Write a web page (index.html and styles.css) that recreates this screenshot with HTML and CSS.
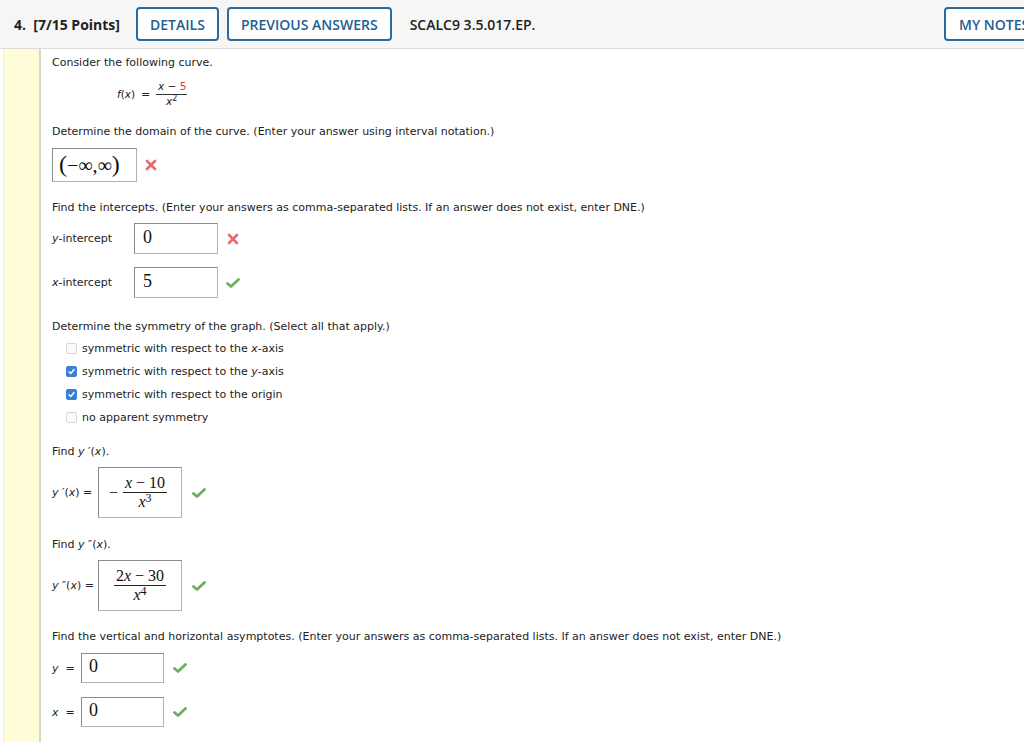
FILE: index.html
```
<!DOCTYPE html>
<html>
<head>
<meta charset="utf-8">
<link rel="stylesheet" href="styles.css">
</head>
<body>
<div class="page">
  <div class="header">
    <span class="qnum">4.&nbsp; [7/15 Points]</span>
    <span class="btn details">DETAILS</span>
    <span class="btn">PREVIOUS ANSWERS</span>
    <span class="code">SCALC9 3.5.017.EP.</span>
    <span class="btn notes">MY NOTES</span>
  </div>
  <div class="main">
    <div class="side"></div>
    <div class="content">
      <p class="txt t1">Consider the following curve.</p>
      <div class="formula">
        <span class="fx"><i>f</i>(<i>x</i>)</span>
        <span class="eq">=</span>
        <span class="sfrac">
          <span class="snum"><i>x</i> − <span class="red">5</span></span>
          <span class="sden"><i>x</i><sup>2</sup></span>
        </span>
      </div>
      <p class="txt t2">Determine the domain of the curve. (Enter your answer using interval notation.)</p>
      <div class="row r-domain">
        <span class="box domain"><span class="math big"><span class="paren">(</span>−∞,∞<span class="paren">)</span></span></span>
        <svg class="icon" viewBox="0 0 12 12"><path d="M2 2 L10 10 M10 2 L2 10" stroke="#e96a6a" stroke-width="2.6" stroke-linecap="round"/></svg>
      </div>
      <p class="txt t3">Find the intercepts. (Enter your answers as comma-separated lists. If an answer does not exist, enter DNE.)</p>
      <div class="row r-int1">
        <span class="lbl w-int"><i>y</i>-intercept</span>
        <span class="box ibox"><span class="math">0</span></span>
        <svg class="icon x2" viewBox="0 0 12 12"><path d="M2 2 L10 10 M10 2 L2 10" stroke="#e96a6a" stroke-width="2.6" stroke-linecap="round"/></svg>
      </div>
      <div class="row r-int2">
        <span class="lbl w-int"><i>x</i>-intercept</span>
        <span class="box ibox"><span class="math">5</span></span>
        <svg class="icon ck2" viewBox="0 0 14 12"><path d="M1.5 6.5 L5 9.5 L12.5 2.5" fill="none" stroke="#6fae5f" stroke-width="2.8" stroke-linecap="round" stroke-linejoin="round"/></svg>
      </div>
      <p class="txt t4">Determine the symmetry of the graph. (Select all that apply.)</p>
      <div class="checks">
        <div class="crow"><span class="cb"></span><span class="ctext">symmetric with respect to the <i>x</i>-axis</span></div>
        <div class="crow"><span class="cb on"><svg viewBox="0 0 10 10"><path d="M2.2 5.2 L4.2 7.2 L7.8 2.8" fill="none" stroke="#fff" stroke-width="1.6" stroke-linecap="round" stroke-linejoin="round"/></svg></span><span class="ctext">symmetric with respect to the <i>y</i>-axis</span></div>
        <div class="crow"><span class="cb on"><svg viewBox="0 0 10 10"><path d="M2.2 5.2 L4.2 7.2 L7.8 2.8" fill="none" stroke="#fff" stroke-width="1.6" stroke-linecap="round" stroke-linejoin="round"/></svg></span><span class="ctext">symmetric with respect to the origin</span></div>
        <div class="crow"><span class="cb"></span><span class="ctext">no apparent symmetry</span></div>
      </div>
      <p class="txt t5">Find <i>y</i> ′(<i>x</i>).</p>
      <div class="row r-d1">
        <span class="lbl w-d"><i>y</i> ′(<i>x</i>) =</span>
        <span class="box dbox">
          <span class="math mrow"><span class="minus">−</span><span class="mfrac"><span class="mnum"><i>x</i> − 10</span><span class="mden"><i>x</i><sup>3</sup></span></span></span>
        </span>
        <svg class="icon ck3" viewBox="0 0 14 12"><path d="M1.5 6.5 L5 9.5 L12.5 2.5" fill="none" stroke="#6fae5f" stroke-width="2.8" stroke-linecap="round" stroke-linejoin="round"/></svg>
      </div>
      <p class="txt t6">Find <i>y</i> ″(<i>x</i>).</p>
      <div class="row r-d2">
        <span class="lbl w-d"><i>y</i> ″(<i>x</i>) =</span>
        <span class="box dbox">
          <span class="math mrow"><span class="mfrac"><span class="mnum">2<i>x</i> − 30</span><span class="mden"><i>x</i><sup>4</sup></span></span></span>
        </span>
        <svg class="icon ck3" viewBox="0 0 14 12"><path d="M1.5 6.5 L5 9.5 L12.5 2.5" fill="none" stroke="#6fae5f" stroke-width="2.8" stroke-linecap="round" stroke-linejoin="round"/></svg>
      </div>
      <p class="txt t7">Find the vertical and horizontal asymptotes. (Enter your answers as comma-separated lists. If an answer does not exist, enter DNE.)</p>
      <div class="row r-a1">
        <span class="lbl w-a"><i>y</i> &nbsp;=</span>
        <span class="box abox"><span class="math">0</span></span>
        <svg class="icon ck4" viewBox="0 0 14 12"><path d="M1.5 6.5 L5 9.5 L12.5 2.5" fill="none" stroke="#6fae5f" stroke-width="2.8" stroke-linecap="round" stroke-linejoin="round"/></svg>
      </div>
      <div class="row r-a2">
        <span class="lbl w-a"><i>x</i> &nbsp;=</span>
        <span class="box abox"><span class="math">0</span></span>
        <svg class="icon ck4" viewBox="0 0 14 12"><path d="M1.5 6.5 L5 9.5 L12.5 2.5" fill="none" stroke="#6fae5f" stroke-width="2.8" stroke-linecap="round" stroke-linejoin="round"/></svg>
      </div>
    </div>
  </div>
</div>
</body>
</html>
```

FILE: styles.css
```
html, body {
  margin: 0;
  padding: 0;
  background: #fff;
  overflow: hidden;
}
.page {
  width: 1024px;
  height: 742px;
  overflow: hidden;
}
.header {
  width: 1060px;
  height: 49px;
  box-sizing: border-box;
  background: #f6f6f6;
  border-bottom: 1px solid #dcdcdc;
  display: flex;
  align-items: center;
  padding-left: 14px;
  font-family: "Open Sans", "Liberation Sans", sans-serif;
  font-size: 14px;
  font-weight: 600;
  color: #222;
}
.qnum {
  font-weight: 700;
  margin-right: 16px;
}
.btn {
  height: 34px;
  box-sizing: border-box;
  border: 2px solid #2c6a9e;
  border-radius: 4px;
  color: #245f91;
  display: flex;
  align-items: center;
  justify-content: center;
  padding: 0 12px;
  margin-right: 8px;
  background: #fff;
}
.details {
  width: 83px;
}
.code {
  margin-left: 10px;
}
.notes {
  margin-left: auto;
  margin-right: 0;
  padding: 0 13px;
  width: 116px;
  justify-content: flex-start;
}
.main {
  display: flex;
  height: 693px;
}
.side {
  width: 35px;
  margin-left: 3px;
  background: #fffdd8;
  border-right: 2px solid #d6d6cc;
  border-left: 1px solid #f0f0e0;
}
.content {
  padding-left: 11px;
  padding-top: 6px;
  font-family: "DejaVu Sans", Verdana, sans-serif;
  font-size: 11px;
  color: #222;
  display: flex;
  flex-direction: column;
  align-items: flex-start;
}
.txt {
  margin: 0;
  line-height: 16px;
  white-space: nowrap;
}
.t2 { margin-top: 16px; }
.t3 { margin-top: 18px; }
.t4 { margin-top: 21px; }
.t5 { margin-top: 15px; }
.t6 { margin-top: 19px; }
.t7 { margin-top: 18px; }

.formula {
  margin-top: 9px;
  margin-left: 65px;
  display: flex;
  align-items: center;
  height: 28px;
  font-size: 10.5px;
}
.eq { margin: 0 6px 0 6px; }
.sfrac {
  display: inline-flex;
  flex-direction: column;
  align-items: center;
}
.snum {
  border-bottom: 1px solid #333;
  padding: 0 1px 1px 2px;
  line-height: 13px;
}
.sden {
  line-height: 13px;
}
.sden sup { font-size: 8px; line-height: 0; vertical-align: 4px; }
.red { color: #e03a2c; }

.row {
  display: flex;
  align-items: center;
}
.r-domain { margin-top: 8px; }
.r-int1 { margin-top: 7px; }
.r-int2 { margin-top: 13px; }
.r-d1 { margin-top: 7px; }
.r-d2 { margin-top: 7px; }
.r-a1 { margin-top: 8px; }
.r-a2 { margin-top: 14px; }

.lbl { white-space: nowrap; }
.w-int { width: 82px; }
.w-d { width: 46px; }
.w-a { width: 29px; }

.box {
  box-sizing: border-box;
  border: 1px solid #b4b4b4;
  border-top-color: #8a8a8a;
  border-left-color: #8a8a8a;
  background: #fff;
  display: flex;
  align-items: center;
}
.domain {
  width: 85px;
  height: 34px;
  padding-left: 6px;
}
.ibox {
  width: 84px;
  height: 31px;
  padding-left: 8px;
}
.dbox {
  width: 84px;
  height: 51px;
  justify-content: center;
}
.abox {
  width: 83px;
  height: 30px;
  padding-left: 7px;
}
.math {
  font-family: "Liberation Serif", "Times New Roman", serif;
  font-size: 18px;
  color: #111;
  line-height: 1;
  margin-top: -4px;
}
.math.big {
  font-size: 20px;
  margin-top: 0;
  display: flex;
  align-items: center;
}
.paren {
  font-size: 24px;
  line-height: 1;
  margin-top: -3px;
}
.mrow {
  display: flex;
  align-items: center;
  font-size: 16px;
  margin-top: 0;
}
.minus { margin-right: 5px; margin-left: -4px; }
.mfrac {
  display: inline-flex;
  flex-direction: column;
  align-items: center;
}
.mnum {
  border-bottom: 1px solid #222;
  padding: 0 2px 1px 2px;
  line-height: 17px;
}
.mden {
  line-height: 18px;
}
.mden sup { font-size: 12px; line-height: 0; vertical-align: 5px; }

.icon {
  width: 12px;
  height: 12px;
  margin-left: 8px;
}
.x2 { margin-left: 9px; }
.ck2, .ck3, .ck4 { width: 14px; height: 12px; }
.ck2 { margin-left: 8px; }
.ck3 { margin-left: 10px; }
.ck4 { margin-left: 9px; }

.checks {
  margin-top: 2px;
  margin-left: 14px;
}
.crow {
  height: 23px;
  display: flex;
  align-items: center;
  white-space: nowrap;
}
.cb {
  width: 11px;
  height: 11px;
  box-sizing: border-box;
  border: 1px solid #d8d8d8;
  border-radius: 2px;
  background: #fbfbfb;
  margin-right: 5px;
  display: flex;
}
.cb.on {
  background: #3a7fd4;
  border-color: #3a7fd4;
}
.cb svg { width: 9px; height: 9px; }
```
